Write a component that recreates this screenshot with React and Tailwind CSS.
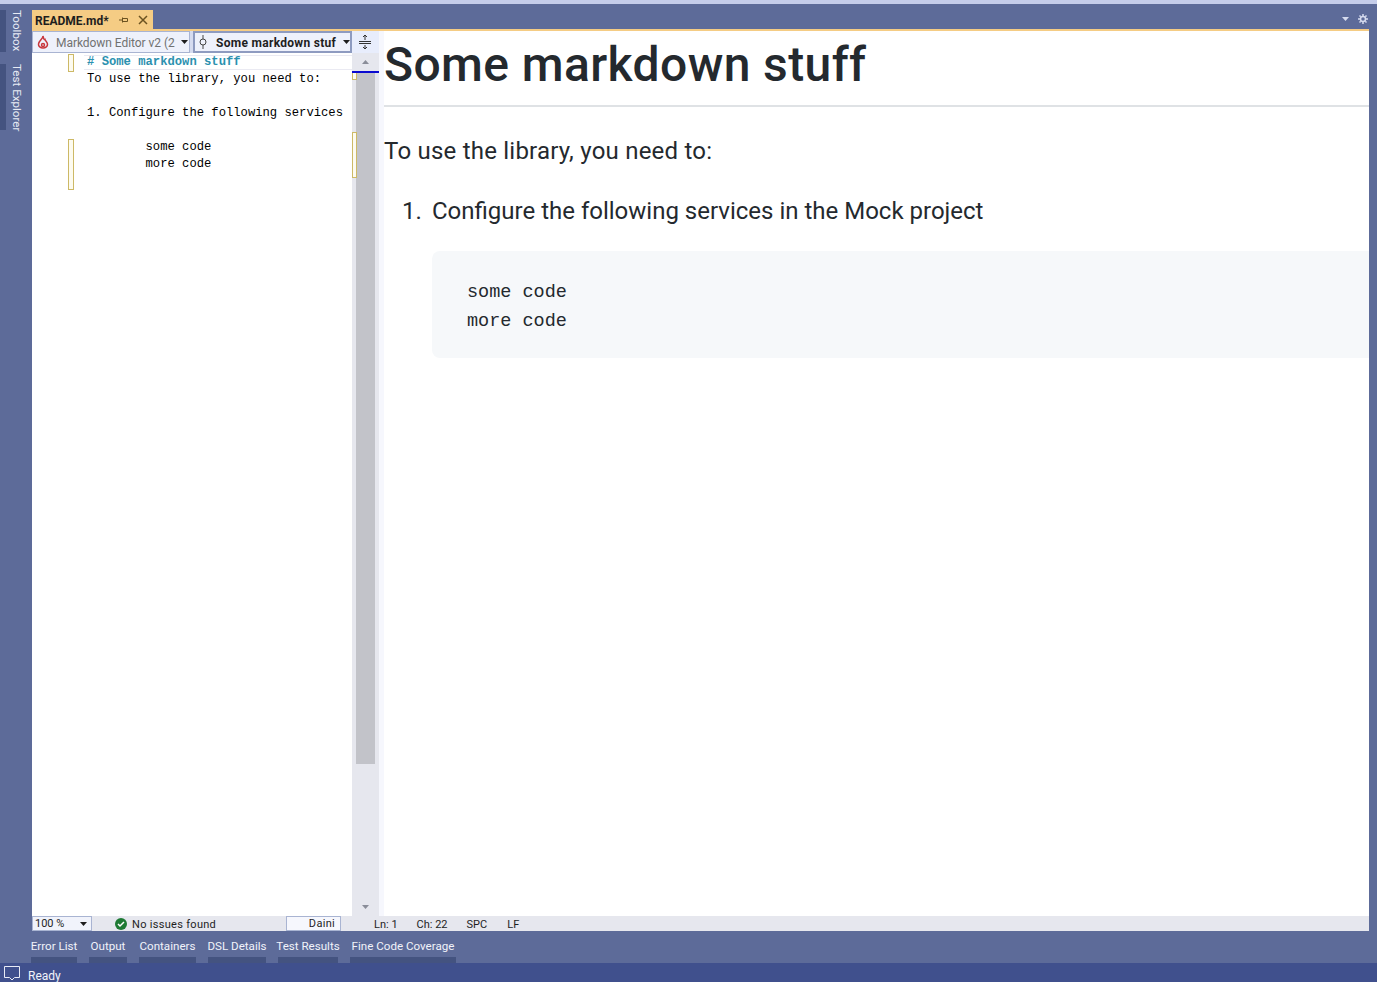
import React from 'react';

const ui = { fontFamily: 'Roboto, "Open Sans", sans-serif' };
const mono = { fontFamily: '"Liberation Mono", "DejaVu Sans Mono", monospace' };

function Caret({ className = 'fill-[#1e1e1e]' }) {
  return (
    <svg width="7" height="4" viewBox="0 0 7 4" className={`shrink-0 ${className}`}>
      <path d="M0 0h7L3.500 4z" />
    </svg>
  );
}

function Flame() {
  return (
    <svg width="12" height="14" viewBox="0 0 12 14" fill="none" stroke="#c8363c" strokeWidth="1.500" className="shrink-0">
      <path d="M6 1C6 4 2 5.500 1.500 9c-.3 2.500 2 4 4.500 4s4.800-1.500 4.500-4C10.200 7 8.500 6 8 4.500 7 5.500 6.500 3 6 1z" />
      <circle cx="6" cy="10" r="1.500" />
    </svg>
  );
}

function ToolTab({ label, width }) {
  return (
    <div className="flex flex-col items-center" style={{ width }}>
      <span className="text-[11.600px] leading-[16px] text-[#f1f3fa] whitespace-nowrap">{label}</span>
      <span className="mt-[3px] h-[6px] w-full bg-[#445380]" />
    </div>
  );
}

const lines = [
  'To use the library, you need to:',
  '',
  '1. Configure the following services',
  '',
  '        some code',
  '        more code',
];

export default function App() {
  return (
    <div className="w-[1377px] h-[982px] overflow-hidden flex flex-col bg-[#5d6b99]" style={ui}>
      <div className="h-[4px] bg-[#c5cdea]" />

      <div className="flex flex-1 min-h-0">
        {/* Side tabs */}
        <div className="w-[32px] flex pt-[6px]">
          <div className="w-[6px] flex flex-col gap-[12px]">
            <div className="h-[42px] bg-[#445380]" />
            <div className="h-[66px] bg-[#445380]" />
          </div>
          <div className="flex flex-col gap-[12px] ml-[3px]">
            <span className="h-[42px] text-[11.600px] leading-[16px] text-[#e8ebf5] [writing-mode:vertical-rl]">Toolbox</span>
            <span className="h-[66px] text-[11.600px] leading-[16px] text-[#e8ebf5] whitespace-nowrap [writing-mode:vertical-rl]">Test Explorer</span>
          </div>
        </div>

        {/* Document well */}
        <div className="flex-1 min-w-0 flex flex-col">
          <div className="h-[25px] flex justify-between items-end">
            <div className="h-[19px] w-[121px] bg-[#f5cc84] flex items-center pl-[3px] text-[#1e1e1e]">
              <span className="w-[84px] text-[12px] font-bold leading-[16px] mt-[2px]">README.md*</span>
              <svg width="10" height="10" viewBox="0 0 10 10" className="mt-[1px]" fill="none" stroke="#6b5220">
                <path d="M3.500 2.500v5M3.500 5H0M3.500 3.500h5v3h-5" />
              </svg>
              <svg width="10" height="10" viewBox="0 0 10 10" className="ml-[9px] mt-[1px]" fill="none" stroke="#6b5220" strokeWidth="1.500">
                <path d="M1 1l8 8M9 1l-8 8" />
              </svg>
            </div>
            <div className="flex items-center gap-[9px] pb-[5px] mr-[1px]">
              <Caret className="fill-[#d6dbee]" />
              <svg width="10" height="10" viewBox="0 0 10 10" fill="none" stroke="#d6dbee" strokeWidth="1.500">
                <circle cx="5" cy="5" r="2.500" />
                <path d="M5 0v2M5 8v2M0 5h2M8 5h2M1.500 1.500l1.200 1.200M7.300 7.300l1.200 1.200M8.500 1.500L7.300 2.700M2.700 7.300L1.500 8.500" />
              </svg>
            </div>
          </div>
          <div className="h-[2px] bg-[#f5cc84]" />

          <div className="flex-1 min-h-0 flex bg-white">
            {/* Editor pane */}
            <div className="w-[347px] flex flex-col">
              <div className="h-[22px] flex bg-[#d6dcf0]">
                <div className="w-[158px] h-[22px] flex items-center bg-[#eef1fb] border border-[#a9b4d2] pl-[4px] pr-[1px]">
                  <Flame />
                  <span className="ml-[7px] w-[126px] text-[12px] leading-[16px] mt-[2px] tracking-[-0.05px] text-[#717171] whitespace-nowrap">Markdown Editor v2 (2</span>
                  <Caret />
                </div>
                <div className="ml-[3px] w-[159px] h-[22px] flex items-center bg-[#eef1fb] border-2 border-[#8e9bc0] pl-[4px]">
                  <svg width="8" height="14" viewBox="0 0 8 14" fill="none" stroke="#444" className="shrink-0">
                    <path d="M4 0v4M4 10v4" />
                    <circle cx="4" cy="7" r="3" />
                  </svg>
                  <span className="ml-[9px] w-[128px] text-[12px] leading-[16px] mt-[2px] font-bold tracking-[0.3px] text-[#1e1e1e] whitespace-nowrap">Some markdown stuf</span>
                  <Caret />
                </div>
                <div className="flex-1 flex items-center justify-center bg-[#e8edfc]">
                  <svg width="12" height="14" viewBox="0 0 12 14" fill="none" stroke="#333" className="-ml-[1px]">
                    <path d="M0 6.500h12M0 8.500h12M6 0v5M6 10v4M4 2l2-2 2 2M4 12l2 2 2-2" />
                  </svg>
                </div>
              </div>

              <div className="flex-1 min-h-0 flex relative">
                {/* Text area */}
                <div className="w-[320px] relative pt-[2px]">
                  <div className="absolute left-[36px] top-[1px] h-[18px] w-[6px] border border-[#cdb966] bg-[#fdfbf0]" />
                  <div className="absolute left-[36px] top-[86px] h-[51px] w-[6px] border border-[#cdb966] bg-[#fdfbf0]" />
                  <div className="ml-[52px] h-[15px] border-y border-[#eaeaf2] text-[12.200px] leading-[13px] font-bold text-[#2b91af] whitespace-pre pl-[3px]" style={mono}>
                    # Some markdown stuff
                  </div>
                  <div className="ml-[55px] pt-[1px]">
                    {lines.map((text, i) => (
                      <div key={i} className="h-[17px] text-[12.200px] leading-[17px] text-black whitespace-pre" style={mono}>{text}</div>
                    ))}
                  </div>
                </div>

                {/* Scrollbar with overview marks */}
                <div className="flex-1 flex bg-[#e6e7ee]">
                  <div className="w-[4px] pt-[20px] relative z-10">
                    <div className="h-[7px] w-[5px] border border-t-0 border-[#cdb966] bg-[#fdfbf0]" />
                    <div className="mt-[52px] h-[46px] w-[5px] border border-[#cdb966] bg-[#fdfbf0]" />
                  </div>
                  <div className="w-[19px] flex flex-col items-center">
                    <div className="h-[18px] w-full flex items-center justify-center">
                      <Caret className="fill-[#8a8d99] rotate-180" />
                    </div>
                    <div className="w-full mt-[2px] h-[691px] bg-[#c2c3c9]" />
                    <div className="mt-auto h-[11px] flex items-start">
                      <Caret className="fill-[#8a8d99]" />
                    </div>
                  </div>
                </div>
                {/* Caret position marker over the scrollbar */}
                <div className="absolute left-[320px] right-0 top-[18px] h-[2px] bg-[#0a0ad0] z-20" />
              </div>
            </div>

            <div className="w-[5px] bg-[#f6f7fd]" />

            {/* Markdown preview */}
            <div className="flex-1 min-w-0 text-[#24292e]">
              <h1 className="h-[76px] border-b-2 border-[#dfe2e5] pt-[1px] text-[48px] leading-[66px] font-medium tracking-[0.4px] whitespace-nowrap">Some markdown stuff</h1>
              <p className="mt-[26px] text-[24px] leading-[36px] tracking-[0.22px]">To use the library, you need to:</p>
              <ol className="mt-[24px] ml-[18px] flex">
                <li className="list-none text-[24px] leading-[36px] flex">
                  <span className="w-[30px]">1.</span>
                  <span>Configure the following services in the Mock project</span>
                </li>
              </ol>
              <div className="mt-[22px] ml-[48px] h-[107px] rounded-l-[8px] bg-[#f6f8fa] pt-[27px] pl-[35px] text-[18.500px] leading-[29px] text-[#24292e]" style={mono}>
                <div>some code</div>
                <div>more code</div>
              </div>
            </div>
          </div>

          {/* Editor status row */}
          <div className="h-[15px] flex items-center bg-[#e6e7ee] text-[11px] leading-[13px] text-[#1e1e1e]">
            <div className="w-[60px] h-[15px] flex items-center justify-between bg-[#f1f3fb] border border-[#a9b4d2] pl-[2px] pr-[4px]">
              <span>100 %</span>
              <Caret />
            </div>
            <svg width="12" height="12" viewBox="0 0 12 12" className="ml-[23px] mt-[1px]">
              <circle cx="6" cy="6" r="6" fill="#1e7a34" />
              <path d="M3 6l2 2 4-4" fill="none" stroke="#fff" strokeWidth="1.500" />
            </svg>
            <span className="ml-[5px] w-[154px] mt-[1px] tracking-[0.3px]">No issues found</span>
            <div className="w-[55px] h-[15px] flex items-center justify-end bg-[#f6f7fd] border border-[#a9b4d2] pr-[5px] tracking-[0.3px]">Daini</div>
            <span className="ml-[33px] mt-[1px]">Ln: 1</span>
            <span className="ml-[19px] mt-[1px]">Ch: 22</span>
            <span className="ml-[19px] mt-[1px]">SPC</span>
            <span className="ml-[20px] mt-[1px]">LF</span>
          </div>
        </div>

        <div className="w-[8px]" />
      </div>

      {/* Tool window tabs */}
      <div className="h-[32px] flex pl-[31px] pt-[7px] gap-[12px]">
        <ToolTab label="Error List" width={46} />
        <ToolTab label="Output" width={38} />
        <ToolTab label="Containers" width={57} />
        <ToolTab label="DSL Details" width={58} />
        <ToolTab label="Test Results" width={60} />
        <ToolTab label="Fine Code Coverage" width={106} />
      </div>

      {/* Status bar */}
      <div className="h-[19px] flex items-center bg-[#40508d] pl-[4px] text-[#f1f3fa]">
        <svg width="16" height="16" viewBox="0 0 16 16" fill="none" stroke="#e8ebf5" className="mt-[1px]">
          <path d="M.5 1.500h15v11h-5l-2.500 2.500-2.500-2.500h-5z" />
        </svg>
        <span className="ml-[8px] text-[12px] leading-[16px] mt-[6px]">Ready</span>
      </div>
    </div>
  );
}
